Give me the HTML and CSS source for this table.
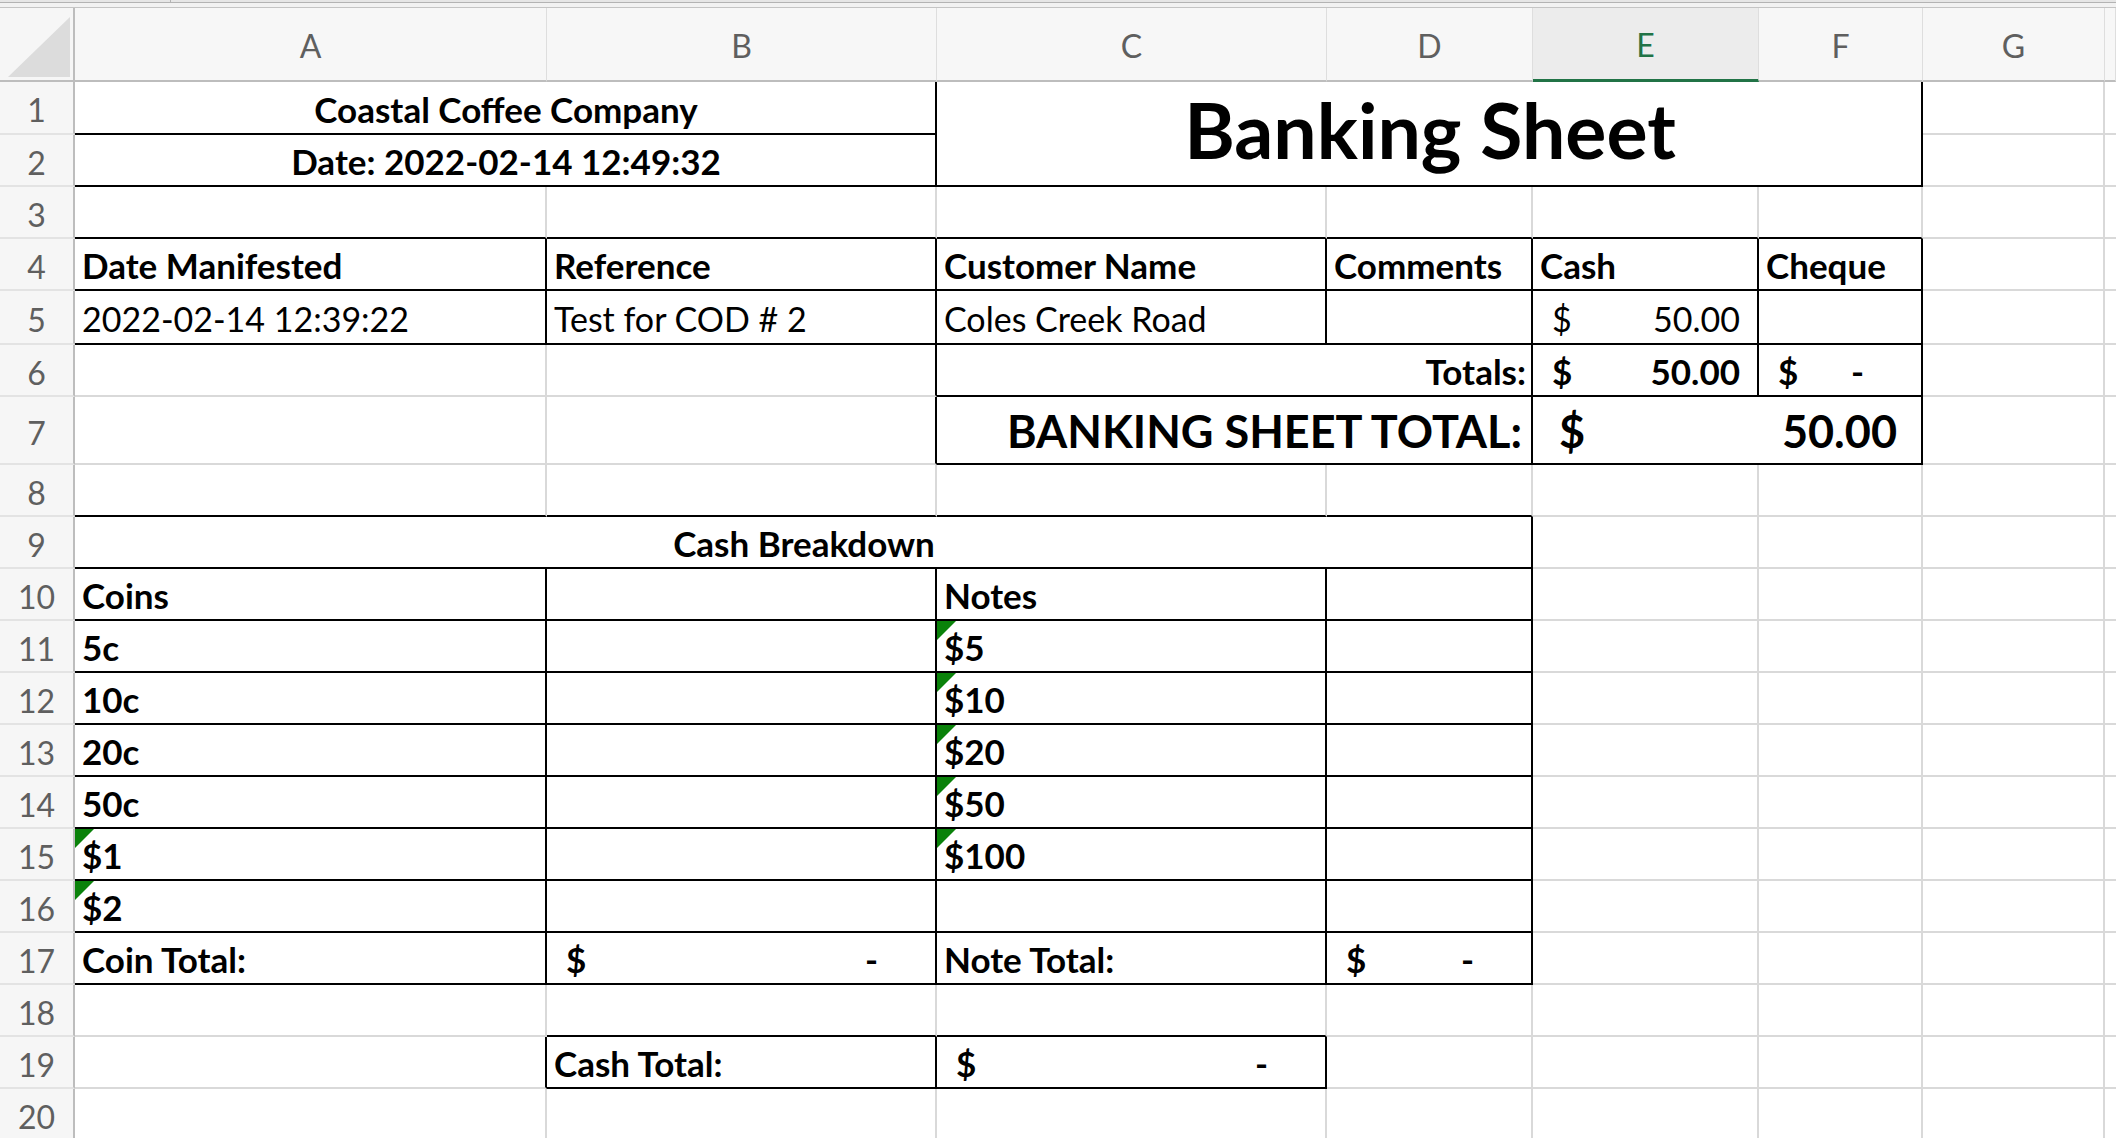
FILE: index.html
```html
<!DOCTYPE html>
<html lang="en">
<head>
<meta charset="utf-8">
<title>Banking Sheet</title>
<link rel="stylesheet" href="styles.css">
</head>
<body>
<div class="topbar"></div>
<div class="sheet">
  <!-- header row -->
  <div class="corner"><svg width="62" height="60" viewBox="0 0 62 60"><polygon points="0,60 62,60 62,0" fill="#dcdcdc"/></svg></div>
  <div class="ch">A</div>
  <div class="ch">B</div>
  <div class="ch">C</div>
  <div class="ch">D</div>
  <div class="ch sel">E</div>
  <div class="ch">F</div>
  <div class="ch">G</div>
  <div class="ch"></div>

  <!-- row 1 -->
  <div class="rh">1</div>
  <div class="c s2 b ctr bb br">Coastal Coffee Company</div>
  <div class="c s4 r2 title br bb">Banking Sheet</div>
  <div class="c"></div>
  <div class="c"></div>

  <!-- row 2 -->
  <div class="rh">2</div>
  <div class="c s2 b ctr bb br">Date: 2022-02-14 12:49:32</div>
  <div class="c"></div>
  <div class="c"></div>

  <!-- row 3 -->
  <div class="rh">3</div>
  <div class="c bb"></div>
  <div class="c bb"></div>
  <div class="c bb"></div>
  <div class="c bb"></div>
  <div class="c bb"></div>
  <div class="c bb"></div>
  <div class="c"></div>
  <div class="c"></div>

  <!-- row 4 -->
  <div class="rh">4</div>
  <div class="c b br bb">Date Manifested</div>
  <div class="c b br bb">Reference</div>
  <div class="c b br bb">Customer Name</div>
  <div class="c b br bb">Comments</div>
  <div class="c b br bb">Cash</div>
  <div class="c b br bb">Cheque</div>
  <div class="c"></div>
  <div class="c"></div>

  <!-- row 5 -->
  <div class="rh">5</div>
  <div class="c br bb">2022-02-14 12:39:22</div>
  <div class="c br bb">Test for COD # 2</div>
  <div class="c br bb">Coles Creek Road</div>
  <div class="c br bb"></div>
  <div class="c br bb acct"><span>$</span><span>50.00</span></div>
  <div class="c br bb"></div>
  <div class="c"></div>
  <div class="c"></div>

  <!-- row 6 -->
  <div class="rh">6</div>
  <div class="c"></div>
  <div class="c br"></div>
  <div class="c s2 b rt br bb">Totals:</div>
  <div class="c b br bb acct"><span>$</span><span>50.00</span></div>
  <div class="c b br bb acct dash"><span>$</span><span>-</span></div>
  <div class="c"></div>
  <div class="c"></div>

  <!-- row 7 -->
  <div class="rh">7</div>
  <div class="c"></div>
  <div class="c br"></div>
  <div class="c s2 big rt br bb">BANKING SHEET TOTAL:</div>
  <div class="c s2 big br bb acct bigacct"><span>$</span><span>50.00</span></div>
  <div class="c"></div>
  <div class="c"></div>

  <!-- row 8 -->
  <div class="rh">8</div>
  <div class="c bb"></div>
  <div class="c bb"></div>
  <div class="c bb"></div>
  <div class="c bb"></div>
  <div class="c"></div>
  <div class="c"></div>
  <div class="c"></div>
  <div class="c"></div>

  <!-- row 9 -->
  <div class="rh">9</div>
  <div class="c s4 b ctr br bb">Cash Breakdown</div>
  <div class="c"></div>
  <div class="c"></div>
  <div class="c"></div>
  <div class="c"></div>

  <!-- row 10 -->
  <div class="rh">10</div>
  <div class="c b br bb">Coins</div>
  <div class="c br bb"></div>
  <div class="c b br bb">Notes</div>
  <div class="c br bb"></div>
  <div class="c"></div>
  <div class="c"></div>
  <div class="c"></div>
  <div class="c"></div>

  <!-- row 11 -->
  <div class="rh">11</div>
  <div class="c b br bb">5c</div>
  <div class="c br bb"></div>
  <div class="c b br bb tri">$5</div>
  <div class="c br bb"></div>
  <div class="c"></div>
  <div class="c"></div>
  <div class="c"></div>
  <div class="c"></div>

  <!-- row 12 -->
  <div class="rh">12</div>
  <div class="c b br bb">10c</div>
  <div class="c br bb"></div>
  <div class="c b br bb tri">$10</div>
  <div class="c br bb"></div>
  <div class="c"></div>
  <div class="c"></div>
  <div class="c"></div>
  <div class="c"></div>

  <!-- row 13 -->
  <div class="rh">13</div>
  <div class="c b br bb">20c</div>
  <div class="c br bb"></div>
  <div class="c b br bb tri">$20</div>
  <div class="c br bb"></div>
  <div class="c"></div>
  <div class="c"></div>
  <div class="c"></div>
  <div class="c"></div>

  <!-- row 14 -->
  <div class="rh">14</div>
  <div class="c b br bb">50c</div>
  <div class="c br bb"></div>
  <div class="c b br bb tri">$50</div>
  <div class="c br bb"></div>
  <div class="c"></div>
  <div class="c"></div>
  <div class="c"></div>
  <div class="c"></div>

  <!-- row 15 -->
  <div class="rh">15</div>
  <div class="c b br bb tri">$1</div>
  <div class="c br bb"></div>
  <div class="c b br bb tri">$100</div>
  <div class="c br bb"></div>
  <div class="c"></div>
  <div class="c"></div>
  <div class="c"></div>
  <div class="c"></div>

  <!-- row 16 -->
  <div class="rh">16</div>
  <div class="c b br bb tri">$2</div>
  <div class="c br bb"></div>
  <div class="c br bb"></div>
  <div class="c br bb"></div>
  <div class="c"></div>
  <div class="c"></div>
  <div class="c"></div>
  <div class="c"></div>

  <!-- row 17 -->
  <div class="rh">17</div>
  <div class="c b br bb">Coin Total:</div>
  <div class="c b br bb acct dash"><span>$</span><span>-</span></div>
  <div class="c b br bb">Note Total:</div>
  <div class="c b br bb acct dash"><span>$</span><span>-</span></div>
  <div class="c"></div>
  <div class="c"></div>
  <div class="c"></div>
  <div class="c"></div>

  <!-- row 18 -->
  <div class="rh">18</div>
  <div class="c"></div>
  <div class="c bb"></div>
  <div class="c bb"></div>
  <div class="c"></div>
  <div class="c"></div>
  <div class="c"></div>
  <div class="c"></div>
  <div class="c"></div>

  <!-- row 19 -->
  <div class="rh">19</div>
  <div class="c br"></div>
  <div class="c b br bb">Cash Total:</div>
  <div class="c b br bb acct dash"><span>$</span><span>-</span></div>
  <div class="c"></div>
  <div class="c"></div>
  <div class="c"></div>
  <div class="c"></div>
  <div class="c"></div>

  <!-- row 20 -->
  <div class="rh">20</div>
  <div class="c"></div>
  <div class="c"></div>
  <div class="c"></div>
  <div class="c"></div>
  <div class="c"></div>
  <div class="c"></div>
  <div class="c"></div>
  <div class="c"></div>
</div>
</body>
</html>
```

FILE: styles.css
```css
html, body {
  margin: 0;
  padding: 0;
  background: #ffffff;
  overflow: hidden;
}

body {
  width: 2116px;
  height: 1138px;
  font-family: Lato, "Open Sans", sans-serif;
  color: #000;
}

.topbar {
  height: 8px;
  background:
    linear-gradient(#b3b3b3, #b3b3b3) 170px 0 / 1px 3px no-repeat,
    linear-gradient(to bottom, #e6e6e6 0 2px, #b3b3b3 2px 3px, #f2f2f2 3px 7px, #c4c4c4 7px 8px);
}

.sheet {
  display: grid;
  grid-template-columns: 75px 472px 390px 390px 206px 226px 164px 182px 11px;
  grid-template-rows: 74px 53px 52px 52px 52px 54px 52px 68px repeat(13, 52px);
}

.corner {
  box-sizing: border-box;
  background: #f6f6f6;
  border-right: 2px solid #bdbdbd;
  border-bottom: 2px solid #bdbdbd;
  padding: 9px 0 0 8px;
}

.corner svg {
  display: block;
}

.ch {
  box-sizing: border-box;
  background: #f7f7f7;
  border-right: 1px solid #dedede;
  border-bottom: 2px solid #bdbdbd;
  display: flex;
  align-items: center;
  justify-content: center;
  font-size: 32px;
  color: #5f5f5f;
  padding-top: 2px;
}

.ch.sel {
  background: #ececec;
  color: #217346;
  border-bottom: 3px solid #217346;
}

.rh {
  box-sizing: border-box;
  background: #f6f6f6;
  border-right: 2px solid #bdbdbd;
  border-bottom: 2px solid #e3e3e3;
  display: flex;
  align-items: center;
  justify-content: center;
  font-size: 32px;
  color: #5f5f5f;
  padding-top: 4px;
}

.c {
  box-sizing: border-box;
  position: relative;
  border-right: 2px solid #d9d9d9;
  border-bottom: 2px solid #d9d9d9;
  display: flex;
  align-items: flex-end;
  padding: 0 5px 3px 7px;
  font-size: 34px;
  line-height: 1.2;
  white-space: nowrap;
  overflow: hidden;
}

.br { border-right-color: #000; }
.bb { border-bottom-color: #000; }
.b { font-weight: 700; font-size: 35px; }
.ctr { justify-content: center; }
.rt { justify-content: flex-end; }

.s2 { grid-column: span 2; }
.s4 { grid-column: span 4; }
.r2 { grid-row: span 2; }

.title {
  font-size: 77px;
  font-weight: 700;
  align-items: center;
  justify-content: center;
  padding-bottom: 8px;
}

.big {
  font-size: 45px;
  font-weight: 700;
  padding-bottom: 5px;
  padding-right: 9px;
}

.acct {
  justify-content: space-between;
  padding-left: 19px;
  padding-right: 17px;
}

.dash {
  padding-right: 57px;
}

.bigacct {
  padding-left: 26px;
  padding-right: 24px;
}

.tri::before {
  content: "";
  position: absolute;
  top: 0;
  left: 0;
  width: 0;
  height: 0;
  border-top: 19px solid #0a820a;
  border-right: 19px solid transparent;
}
```
